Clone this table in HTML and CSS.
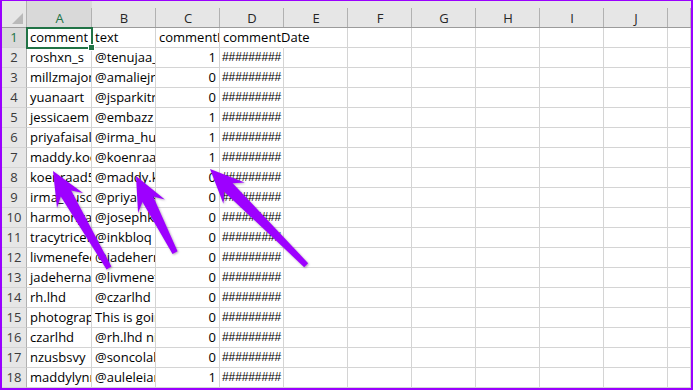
FILE: index.html
```html
<!DOCTYPE html>
<html lang="en">
<head>
    <meta charset="UTF-8">
    <title>comments.xlsx</title>
    <link rel="stylesheet" href="styles.css">
</head>
<body>
    <div class="sheet">
        <div class="row head">
            <div class="c corner"></div>
            <div class="c col active">A</div>
            <div class="c col">B</div>
            <div class="c col">C</div>
            <div class="c col">D</div>
            <div class="c col">E</div>
            <div class="c col">F</div>
            <div class="c col">G</div>
            <div class="c col">H</div>
            <div class="c col">I</div>
            <div class="c col">J</div>
            <div class="c col"></div>
        </div>
        <div class="row">
            <div class="c num active">1</div>
            <div class="c sel"><span class="clip">commentUsername</span></div>
            <div class="c">text</div>
            <div class="c">commentLikes</div>
            <div class="c spill">commentDate</div>
            <div class="c"></div><div class="c"></div><div class="c"></div><div class="c"></div><div class="c"></div><div class="c"></div><div class="c"></div>
        </div>
        <div class="row">
            <div class="c num">2</div>
            <div class="c">roshxn_s</div>
            <div class="c">@tenujaa_</div>
            <div class="c r">1</div>
            <div class="c hash">#########</div>
            <div class="c"></div><div class="c"></div><div class="c"></div><div class="c"></div><div class="c"></div><div class="c"></div><div class="c"></div>
        </div>
        <div class="row">
            <div class="c num">3</div>
            <div class="c">millzmajor</div>
            <div class="c">@amaliejrose</div>
            <div class="c r">0</div>
            <div class="c hash">#########</div>
            <div class="c"></div><div class="c"></div><div class="c"></div><div class="c"></div><div class="c"></div><div class="c"></div><div class="c"></div>
        </div>
        <div class="row">
            <div class="c num">4</div>
            <div class="c">yuanaart</div>
            <div class="c">@jsparkitrue</div>
            <div class="c r">0</div>
            <div class="c hash">#########</div>
            <div class="c"></div><div class="c"></div><div class="c"></div><div class="c"></div><div class="c"></div><div class="c"></div><div class="c"></div>
        </div>
        <div class="row">
            <div class="c num">5</div>
            <div class="c">jessicaem</div>
            <div class="c">@embazz</div>
            <div class="c r">1</div>
            <div class="c hash">#########</div>
            <div class="c"></div><div class="c"></div><div class="c"></div><div class="c"></div><div class="c"></div><div class="c"></div><div class="c"></div>
        </div>
        <div class="row">
            <div class="c num">6</div>
            <div class="c">priyafaisal</div>
            <div class="c">@irma_huso</div>
            <div class="c r">1</div>
            <div class="c hash">#########</div>
            <div class="c"></div><div class="c"></div><div class="c"></div><div class="c"></div><div class="c"></div><div class="c"></div><div class="c"></div>
        </div>
        <div class="row">
            <div class="c num">7</div>
            <div class="c">maddy.koen</div>
            <div class="c">@koenraad5</div>
            <div class="c r">1</div>
            <div class="c hash">#########</div>
            <div class="c"></div><div class="c"></div><div class="c"></div><div class="c"></div><div class="c"></div><div class="c"></div><div class="c"></div>
        </div>
        <div class="row">
            <div class="c num">8</div>
            <div class="c">koenraad5</div>
            <div class="c">@maddy.koen</div>
            <div class="c r">0</div>
            <div class="c hash">#########</div>
            <div class="c"></div><div class="c"></div><div class="c"></div><div class="c"></div><div class="c"></div><div class="c"></div><div class="c"></div>
        </div>
        <div class="row">
            <div class="c num">9</div>
            <div class="c">irma_huso</div>
            <div class="c">@priyafaisal</div>
            <div class="c r">0</div>
            <div class="c hash">#########</div>
            <div class="c"></div><div class="c"></div><div class="c"></div><div class="c"></div><div class="c"></div><div class="c"></div><div class="c"></div>
        </div>
        <div class="row">
            <div class="c num">10</div>
            <div class="c">harmonyart</div>
            <div class="c">@josephkart</div>
            <div class="c r">0</div>
            <div class="c hash">#########</div>
            <div class="c"></div><div class="c"></div><div class="c"></div><div class="c"></div><div class="c"></div><div class="c"></div><div class="c"></div>
        </div>
        <div class="row">
            <div class="c num">11</div>
            <div class="c">tracytricerat</div>
            <div class="c">@inkbloq</div>
            <div class="c r">0</div>
            <div class="c hash">#########</div>
            <div class="c"></div><div class="c"></div><div class="c"></div><div class="c"></div><div class="c"></div><div class="c"></div><div class="c"></div>
        </div>
        <div class="row">
            <div class="c num">12</div>
            <div class="c">livmenefee</div>
            <div class="c">@jadehernandez</div>
            <div class="c r">0</div>
            <div class="c hash">#########</div>
            <div class="c"></div><div class="c"></div><div class="c"></div><div class="c"></div><div class="c"></div><div class="c"></div><div class="c"></div>
        </div>
        <div class="row">
            <div class="c num">13</div>
            <div class="c">jadehernandez</div>
            <div class="c">@livmenefee</div>
            <div class="c r">0</div>
            <div class="c hash">#########</div>
            <div class="c"></div><div class="c"></div><div class="c"></div><div class="c"></div><div class="c"></div><div class="c"></div><div class="c"></div>
        </div>
        <div class="row">
            <div class="c num">14</div>
            <div class="c">rh.lhd</div>
            <div class="c">@czarlhd</div>
            <div class="c r">0</div>
            <div class="c hash">#########</div>
            <div class="c"></div><div class="c"></div><div class="c"></div><div class="c"></div><div class="c"></div><div class="c"></div><div class="c"></div>
        </div>
        <div class="row">
            <div class="c num">15</div>
            <div class="c">photography</div>
            <div class="c">This is going</div>
            <div class="c r">0</div>
            <div class="c hash">#########</div>
            <div class="c"></div><div class="c"></div><div class="c"></div><div class="c"></div><div class="c"></div><div class="c"></div><div class="c"></div>
        </div>
        <div class="row">
            <div class="c num">16</div>
            <div class="c">czarlhd</div>
            <div class="c">@rh.lhd  nice</div>
            <div class="c r">0</div>
            <div class="c hash">#########</div>
            <div class="c"></div><div class="c"></div><div class="c"></div><div class="c"></div><div class="c"></div><div class="c"></div><div class="c"></div>
        </div>
        <div class="row">
            <div class="c num">17</div>
            <div class="c">nzusbsvy</div>
            <div class="c">@soncolab</div>
            <div class="c r">0</div>
            <div class="c hash">#########</div>
            <div class="c"></div><div class="c"></div><div class="c"></div><div class="c"></div><div class="c"></div><div class="c"></div><div class="c"></div>
        </div>
        <div class="row">
            <div class="c num">18</div>
            <div class="c">maddylynn</div>
            <div class="c">@auleleiarts</div>
            <div class="c r">1</div>
            <div class="c hash">#########</div>
            <div class="c"></div><div class="c"></div><div class="c"></div><div class="c"></div><div class="c"></div><div class="c"></div><div class="c"></div>
        </div>

        <!-- callout arrows drawn on top of the grid -->
        <svg class="marks" width="693" height="390" viewBox="0 0 693 390">
            <g transform="translate(53,171) rotate(60)">
                <polygon points="0,0 34,-15 26,-6 112,-2.8 112,2.8 26,6 34,15"/>
            </g>
            <g transform="translate(136,176) rotate(63)">
                <polygon points="0,0 34,-15 26,-6 86,-2.8 86,2.8 26,6 34,15"/>
            </g>
            <g transform="translate(210,169) rotate(45)">
                <polygon points="0,0 34,-15 26,-6 136,-2.8 136,2.8 26,6 34,15"/>
            </g>
        </svg>
    </div>
</body>
</html>
```

FILE: styles.css
```css
body {
    margin: 0;
    background: #fff;
    font-family: "Open Sans", "Liberation Sans", sans-serif;
    font-size: 13px;
    color: #000;
}
.sheet {
    position: relative;
    width: 693px;
    height: 390px;
    box-sizing: border-box;
    border: 2px solid #9a00ff;
    border-top-width: 1px;
    overflow: hidden;
}
.row {
    display: grid;
    grid-template-columns: 25px 65px repeat(9, 64px) 1fr;
    height: 20px;
}
.c {
    box-sizing: border-box;
    border-right: 1px solid #d4d4d4;
    border-bottom: 1px solid #d4d4d4;
    padding: 0 3px;
    line-height: 19px;
    white-space: nowrap;
    overflow: hidden;
}
.c.r {
    text-align: right;
}
/* date column too narrow, shown as hashes */
.c.hash {
    font-family: "Liberation Sans", sans-serif;
    font-size: 12px;
    letter-spacing: -0.1px;
    padding-left: 2px;
}
.c.spill {
    overflow: visible;
    border-right-color: transparent;
}
/* selected cell: green frame with the fill handle */
.c.sel {
    position: relative;
    overflow: visible;
    outline: 2px solid #217346;
    outline-offset: -1px;
    z-index: 1;
}
.c.sel .clip {
    display: block;
    overflow: hidden;
}
.c.sel::after {
    content: "";
    position: absolute;
    right: -4px;
    bottom: -4px;
    width: 5px;
    height: 5px;
    background: #217346;
    border: 1px solid #fff;
}
/* header band */
.row.head {
    height: 27px;
    background: #e6e6e6;
}
.head .c {
    position: relative;
    border-right: none;
    border-bottom: 1px solid #9b9b9b;
    text-align: center;
    line-height: 26px;
    padding-top: 4px;
    color: #262626;
}
.head .col::after {
    content: "";
    position: absolute;
    right: 0;
    top: 7px;
    bottom: 0;
    width: 1px;
    background: #b1b1b1;
}
.head .corner {
    border-right: 1px solid #b1b1b1;
}
.head .corner::after {
    content: "";
    position: absolute;
    right: 3px;
    bottom: 3px;
    width: 11px;
    height: 11px;
    background: #b9b9b9;
    clip-path: polygon(100% 0, 100% 100%, 0 100%);
}
.head .col.active {
    background: #d9d9d9;
    color: #217346;
}
.c.num {
    background: #e6e6e6;
    border-right-color: #b1b1b1;
    text-align: center;
    padding: 0;
    color: #3a3a3a;
}
.c.num.active {
    background: #d9d9d9;
    color: #217346;
}
.marks {
    position: absolute;
    left: -2px;
    top: -1px;
    pointer-events: none;
    fill: #9d00ff;
    filter: drop-shadow(1px 1px 1px rgba(40, 0, 60, 0.35));
}
```
